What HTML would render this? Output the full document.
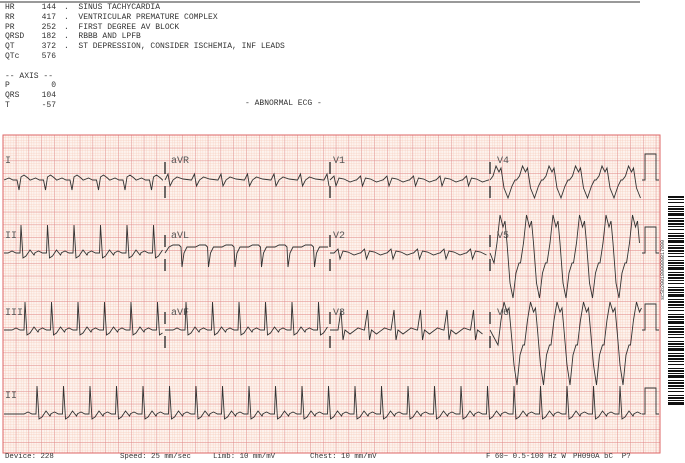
<!DOCTYPE html>
<html><head><meta charset="utf-8"><style>
html,body{margin:0;padding:0;background:#fff;width:685px;height:463px;overflow:hidden}
body{position:relative;font-family:"Liberation Mono","DejaVu Sans Mono",monospace;color:#222}
.t{position:absolute;font-size:8px;line-height:9.8px;white-space:pre;color:#333}
.b{position:absolute;font-size:7.4px;white-space:pre;color:#333;top:453px}
svg{position:absolute;left:0;top:0}
</style></head><body>
<div style="position:absolute;left:0;top:1px;width:640px;height:2px;background:#999"></div>
<div class="t" style="left:5px;top:3px">HR
RR
PR
QRSD
QT
QTc

-- AXIS --
P
QRS
T</div>
<div class="t" style="left:33px;top:3px;text-align:right;width:23px">144
417
252
182
372
576


0
104
-57</div>
<div class="t" style="left:64px;top:3px">.  SINUS TACHYCARDIA
.  VENTRICULAR PREMATURE COMPLEX
.  FIRST DEGREE AV BLOCK
.  RBBB AND LPFB
.  ST DEPRESSION, CONSIDER ISCHEMIA, INF LEADS</div>
<div class="t" style="left:245px;top:99px">- ABNORMAL ECG -</div>
<svg width="685" height="463" id="s">
<defs>
<pattern id="mi" width="2.56" height="2.56" patternUnits="userSpaceOnUse" x="3" y="135"><path d="M0 0H2.56M0 0V2.56" stroke="#f6c9b8" stroke-width="0.6" fill="none"/></pattern>
<pattern id="ma" width="12.8" height="12.8" patternUnits="userSpaceOnUse" x="3" y="135"><path d="M0 0H12.8M0 0V12.8" stroke="#e08a8a" stroke-width="0.9" fill="none"/></pattern>
</defs>
<rect x="3" y="135" width="657" height="318" fill="#fdf3ee"/>
<rect x="3" y="135" width="657" height="318" fill="url(#mi)"/>
<rect x="3" y="135" width="657" height="318" fill="url(#ma)"/>
<rect x="3" y="135" width="657" height="318" fill="none" stroke="#d66" stroke-width="1"/>
<g font-family="Liberation Mono,monospace" font-size="10" fill="#555">
<text x="5" y="163">I</text><text x="171" y="163">aVR</text><text x="333" y="163">V1</text><text x="497" y="163">V4</text>
<text x="5" y="238">II</text><text x="171" y="238">aVL</text><text x="333" y="238">V2</text><text x="497" y="238">V5</text>
<text x="5" y="315">III</text><text x="171" y="315">aVF</text><text x="333" y="315">V3</text><text x="497" y="315">V6</text>
<text x="5" y="398">II</text>
</g>
<g id="tr" fill="none" stroke="#333" stroke-width="0.9"></g>
<g id="bc"></g>
<text x="664" y="300" font-size="5" fill="#333" transform="rotate(-90 664 300)" font-family="Liberation Mono,monospace">scSb2001800080817890</text>
</svg>
<div class="b" style="left:5px">Device: 228</div>
<div class="b" style="left:120px">Speed: 25 mm/sec</div>
<div class="b" style="left:213px">Limb: 10 mm/mV</div>
<div class="b" style="left:310px">Chest: 10 mm/mV</div>
<div class="b" style="left:486px">F 60~ 0.5-100 Hz W</div>
<div class="b" style="left:573px">PH090A bC  P?</div>
<script>
var T={
neg:[[0,0],[5,-2],[9,0],[13,0],[15,10],[17,-3],[20,-5],[24,-2],[26,0]],
avr:[[0,0],[3,-6],[5,6],[8,0],[12,-3],[18,-1],[26,0]],
pos:[[0,0],[4,-2],[8,0],[12,0],[13,-28],[15,5],[18,3],[22,-3],[26,2],[27,0]],
dn:[[0,-6],[4,-8],[10,-8],[12,-6],[13,14],[15,0],[18,-6],[26,-6]],
v1:[[0,0],[4,-4],[6,6],[9,-2],[14,-1],[20,2],[26,0]],
v3:[[0,0],[3,-20],[5,10],[7,0],[12,4],[20,-2],[26,0]],
big:[[0,10],[3,-10],[6,-38],[9,-26],[11,-32],[13,-10],[16,30],[19,45],[22,20],[25,10]],
big6:[[0,15],[3,-10],[6,-28],[9,-18],[11,-22],[13,0],[16,35],[19,55],[22,25],[25,15]],
big4:[[0,0],[3,-4],[6,-14],[9,-8],[11,-12],[14,8],[18,18],[22,6],[25,0]]
};
var rows=[[180,['neg','avr','v1','big4']],[253,['pos','dn','v1','big']],[330,['pos','pos','v3','big6']]];
var cols=[[4,165],[165,330],[330,490],[490,642]];
var g=document.getElementById('tr'),h='';
function seg(x0,x1,y,t,ph){var d='M'+x0+' '+y,x=x0+ph;var p=T[t];while(x<x1){for(var i=0;i<p.length;i++){var px=x+p[i][0];if(px>x1)break;if(px<x0)continue;d+='L'+px.toFixed(1)+' '+(y+p[i][1]);}x+=26.5;}return d;}
rows.forEach(function(r,ri){r[1].forEach(function(t,ci){h+='<path d="'+seg(cols[ci][0],cols[ci][1],r[0],t,ri*4)+'"/>';if(ci>0)h+='<path d="M'+cols[ci][0]+' '+(r[0]-18)+'V'+(r[0]-6)+'M'+cols[ci][0]+' '+(r[0]+6)+'V'+(r[0]+18)+'" stroke-width="1.4"/>';});
h+='<path d="M642 '+r[0]+'H645V'+(r[0]-26)+'H656V'+r[0]+'H659"/>';});
h+='<path d="'+seg(4,642,414,'pos',20)+'"/><path d="M642 414H645V388H656V414H659"/>';
g.innerHTML=h;
var b='',y=196;var w=[2,1,1,2,1,3,1,1,2,1,1,1,3,2,1,1,2,1];var k=0;while(y<405){var hh=w[k%w.length];if(k%2==0)b+='<rect x="668" y="'+y+'" width="16" height="'+hh+'" fill="#111"/>';y+=hh;k++;}
document.getElementById('bc').innerHTML=b;
</script>
</body></html>
